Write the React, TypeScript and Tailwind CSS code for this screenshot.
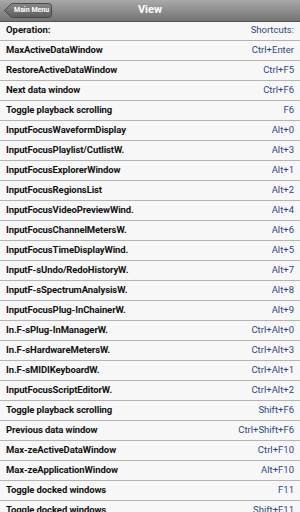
import React from 'react';

interface Shortcut {
  label: string;
  keys: string;
}

const shortcuts: Shortcut[] = [
  { label: 'MaxActiveDataWindow', keys: 'Ctrl+Enter' },
  { label: 'RestoreActiveDataWindow', keys: 'Ctrl+F5' },
  { label: 'Next data window', keys: 'Ctrl+F6' },
  { label: 'Toggle playback scrolling', keys: 'F6' },
  { label: 'InputFocusWaveformDisplay', keys: 'Alt+0' },
  { label: 'InputFocusPlaylist/CutlistW.', keys: 'Alt+3' },
  { label: 'InputFocusExplorerWindow', keys: 'Alt+1' },
  { label: 'InputFocusRegionsList', keys: 'Alt+2' },
  { label: 'InputFocusVideoPreviewWind.', keys: 'Alt+4' },
  { label: 'InputFocusChannelMetersW.', keys: 'Alt+6' },
  { label: 'InputFocusTimeDisplayWind.', keys: 'Alt+5' },
  { label: 'InputF-sUndo/RedoHistoryW.', keys: 'Alt+7' },
  { label: 'InputF-sSpectrumAnalysisW.', keys: 'Alt+8' },
  { label: 'InputFocusPlug-InChainerW.', keys: 'Alt+9' },
  { label: 'In.F-sPlug-InManagerW.', keys: 'Ctrl+Alt+0' },
  { label: 'In.F-sHardwareMetersW.', keys: 'Ctrl+Alt+3' },
  { label: 'In.F-sMIDIKeyboardW.', keys: 'Ctrl+Alt+1' },
  { label: 'InputFocusScriptEditorW.', keys: 'Ctrl+Alt+2' },
  { label: 'Toggle playback scrolling', keys: 'Shift+F6' },
  { label: 'Previous data window', keys: 'Ctrl+Shift+F6' },
  { label: 'Max-zeActiveDataWindow', keys: 'Ctrl+F10' },
  { label: 'Max-zeApplicationWindow', keys: 'Alt+F10' },
  { label: 'Toggle docked windows', keys: 'F11' },
  { label: 'Toggle docked windows', keys: 'Shift+F11' },
];

const Row: React.FC<{ label: string; keys: string }> = ({ label, keys }) => (
  <div className="flex h-[20px] shrink-0 items-center justify-between border-b border-[#b4b4b4] pl-[6px] pr-[6px]">
    <span className="text-[9.5px] font-bold text-[#111] tracking-[-0.1px]">{label}</span>
    <span className="text-[9.5px] text-[#2e4780]">{keys}</span>
  </div>
);

const BackButton: React.FC = () => (
  <div className="relative ml-[4px] flex h-[15px] items-center">
    <svg width="48" height="15" viewBox="0 0 48 15" className="absolute left-0 top-0">
      <defs>
        <linearGradient id="btn" x1="0" y1="0" x2="0" y2="1">
          <stop offset="0" stopColor="#8a8a8a" />
          <stop offset="1" stopColor="#5c5c5c" />
        </linearGradient>
      </defs>
      <path
        d="M0.5 7.5 L7 1 Q7.5 0.5 8.5 0.5 H44.5 Q47.5 0.5 47.5 3.5 V11.5 Q47.5 14.5 44.5 14.5 H8.5 Q7.5 14.5 7 14 Z"
        fill="url(#btn)"
        stroke="#4a4a4a"
      />
    </svg>
    <span className="relative pl-[10px] pr-[4px] text-[7px] font-bold text-white">Main Menu</span>
  </div>
);

export default function App() {
  return (
    <div
      className="flex h-[512px] w-[300px] flex-col overflow-hidden bg-[#f7f7f7]"
      style={{ fontFamily: 'Roboto, "Liberation Sans", sans-serif' }}
    >
      <div className="relative flex h-[22px] shrink-0 items-center border-b border-[#555] bg-gradient-to-b from-[#a9a9a9] to-[#737373]">
        <BackButton />
        <div className="absolute inset-0 flex items-center justify-center text-[11px] font-bold text-white">
          View
        </div>
      </div>
      <div className="flex h-[20px] shrink-0 items-center justify-between border-b border-[#b4b4b4] px-[6px] -mt-px">
        <span className="text-[9.5px] font-bold text-[#111]">Operation:</span>
        <span className="text-[9.5px] text-[#2e4780]">Shortcuts:</span>
      </div>
      {shortcuts.map((s, i) => (
        <Row key={i} label={s.label} keys={s.keys} />
      ))}
    </div>
  );
}
